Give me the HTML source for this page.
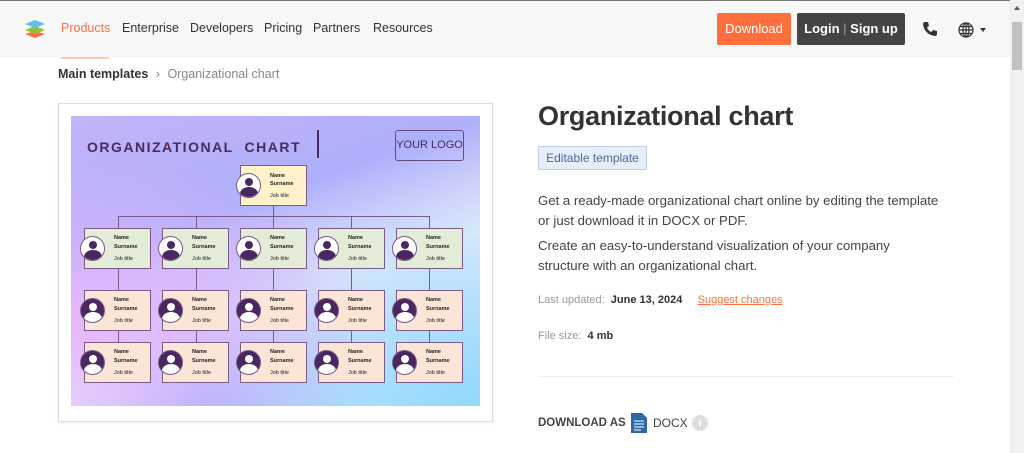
<!DOCTYPE html>
<html><head><meta charset="utf-8"><style>
*{margin:0;padding:0;box-sizing:border-box}
body{width:1024px;height:453px;overflow:hidden;background:#fff;font-family:"Liberation Sans",sans-serif;position:relative}
.a{position:absolute}
.hdr{left:0;top:0;width:1010px;height:58px;background:#f7f7f7;border-top:1px solid #777}
.nav{top:21px;font-size:12.5px;color:#333;white-space:nowrap}
.b{position:absolute;width:67px;height:41px;border:1px solid #7a5a86;background:#fbe5d6}
.b.g{background:#e2ecd6}.b.y{background:#fff2c8}
.b i{position:absolute;left:29px;font-style:normal;font-size:5.5px;color:#222;line-height:1}
.c{position:absolute;width:25px;height:25px;border-radius:50%;left:-5px;top:7px;border:1px solid #7a5a86;overflow:hidden}
.c.w{background:#fff}.c.d{background:#4a2760}
.c::before{content:"";position:absolute;left:8px;top:4px;width:8px;height:8px;border-radius:50%}
.c::after{content:"";position:absolute;left:3px;top:13px;width:18px;height:14px;border-radius:50% 50% 0 0}
.c.w::before,.c.w::after{background:#4a2760}
.c.d::before,.c.d::after{background:#fff}
.ln{position:absolute;background:#7a5a86}
</style></head><body>
<div class="a hdr"></div>
<svg class="a" style="left:24px;top:19px" width="22" height="20" viewBox="0 0 22 20"><path d="M11 12 L21 15 L11 19 L1 15Z" fill="#ff6f3d"/><path d="M11 7 L21 11 L11 15 L1 11Z" fill="#95c038"/><path d="M11 1 L21 5 L11 9 L1 5Z" fill="#5dc0e8"/></svg>
<div class="a nav" style="left:61px;color:#ff6f3d">Products</div>
<div class="a" style="left:61px;top:57px;width:48px;height:2px;background:#ffc8b5"></div>
<div class="a nav" style="left:122px">Enterprise</div>
<div class="a nav" style="left:190px">Developers</div>
<div class="a nav" style="left:264px">Pricing</div>
<div class="a nav" style="left:313px">Partners</div>
<div class="a nav" style="left:373px">Resources</div>
<div class="a" style="left:717px;top:13px;width:74px;height:32px;background:#ff6f3d;border-radius:2px;color:#fff;font-size:13px;text-align:center;line-height:32px">Download</div>
<div class="a" style="left:797px;top:13px;width:108px;height:32px;background:#444;border-radius:2px;color:#fff;font-size:13px;text-align:center;line-height:32px;font-weight:bold">Login <span style="color:#999;font-weight:normal">|</span> Sign up</div>
<svg class="a" style="left:922px;top:21px" width="16" height="16" viewBox="0 0 16 16"><path d="M3 1 L6 1 L7 5 L5 6.5 C6 9 7.5 10.5 9.5 11 L11 9 L15 10 L15 13 C15 14 14 15 13 15 C6 14 2 10 1 3 C1 2 2 1 3 1Z" fill="#333"/></svg>
<svg class="a" style="left:957px;top:21px" width="18" height="18" viewBox="0 0 18 18" fill="none" stroke="#333" stroke-width="1.2"><circle cx="9" cy="9" r="7"/><ellipse cx="9" cy="9" rx="3" ry="7"/><path d="M2 9H16M3 5.5H15M3 12.5H15M9 2V16"/></svg>
<div class="a" style="left:980px;top:28px;border:3px solid transparent;border-top:4px solid #333"></div>
<div class="a" style="left:1010px;top:0;width:14px;height:453px;background:#f1f1f1"></div>
<div class="a" style="left:1014px;top:6px;border:3px solid transparent;border-bottom:4px solid #555;border-top:none"></div>
<div class="a" style="left:1012px;top:22px;width:10px;height:48px;background:#c1c1c1"></div>
<div class="a" style="left:58px;top:67px;font-size:12.5px;color:#333;font-weight:bold">Main templates <span style="font-weight:normal;color:#888;margin:0 4px">›</span> <span style="font-weight:normal;color:#888">Organizational chart</span></div>

<div class="a" style="left:58px;top:103px;width:435px;height:319px;border:1px solid #ddd;box-shadow:0 1px 3px rgba(0,0,0,.08)"></div>
<div class="a" style="left:71px;top:116px;width:409px;height:290px;overflow:hidden;background:linear-gradient(160deg,#c4b2f8 0%,#aeb0fb 35%,#e9ebfb 60%,#c8e6fc 100%)">
<div class="a" style="left:0;top:0;width:409px;height:290px;background:radial-gradient(ellipse at 0% 70%,rgba(236,180,252,.9),rgba(236,180,252,0) 55%),radial-gradient(ellipse at 100% 100%,rgba(140,215,252,.9),rgba(140,215,252,0) 55%),radial-gradient(ellipse at 35% 100%,rgba(160,150,250,.7),rgba(160,150,250,0) 45%)"></div>
<div class="a" style="left:16px;top:23px;font-size:14px;font-weight:bold;letter-spacing:1.5px;color:#4a2b5c;white-space:nowrap">ORGANIZATIONAL&nbsp;&nbsp;CHART</div>
<div class="a" style="left:246px;top:14px;width:2px;height:28px;background:#4a2b5c"></div>
<div class="a" style="left:324px;top:14px;width:69px;height:31px;border:1.5px solid #6a4a7a;border-radius:3px;font-size:11px;color:#4a2b5c;text-align:center;line-height:28px">YOUR LOGO</div>
<div class="ln" style="left:202px;top:90px;width:1px;height:12px"></div>
<div class="ln" style="left:47px;top:100px;width:312px;height:1px"></div>
<div class="ln" style="left:47px;top:100px;width:1px;height:127px"></div>
<div class="ln" style="left:125px;top:100px;width:1px;height:127px"></div>
<div class="ln" style="left:202px;top:100px;width:1px;height:127px"></div>
<div class="ln" style="left:280px;top:100px;width:1px;height:127px"></div>
<div class="ln" style="left:358px;top:100px;width:1px;height:127px"></div>
</div>
<div id="boxes"></div>
<div class="b y" style="left:240px;top:165px"><div class="c w"></div><i style="top:8px;font-weight:bold">Name</i><i style="top:16px;font-weight:bold">Surname</i><i style="top:28px">Job title</i></div>
<script>
var L=[84,162,240,318,396],T=[228,290,342],h='';
T.forEach(function(t,r){L.forEach(function(l){h+='<div class="b '+(r==0?'g':'')+'" style="left:'+l+'px;top:'+t+'px"><div class="c '+(r==0?'w':'d')+'"></div><i style="top:7px;font-weight:bold">Name</i><i style="top:16px;font-weight:bold">Surname</i><i style="top:28px">Job title</i></div>'})});
document.getElementById('boxes').outerHTML=h;
</script>

<div class="a" style="left:538px;top:101px;font-size:27px;font-weight:bold;color:#333;letter-spacing:-0.3px">Organizational chart</div>
<div class="a" style="left:538px;top:146px;width:109px;height:24px;background:#e6eef9;border:1px solid #bccde6;border-radius:2px;font-size:12px;color:#4a6a96;text-align:center;line-height:22px">Editable template</div>
<div class="a" style="left:538px;top:191px;width:415px;font-size:13.2px;color:#444;line-height:20px">Get a ready-made organizational chart online by editing the template or just download it in DOCX or PDF.</div>
<div class="a" style="left:538px;top:236px;width:370px;font-size:13.2px;color:#444;line-height:20px">Create an easy-to-understand visualization of your company structure with an organizational chart.</div>
<div class="a" style="left:538px;top:294px;font-size:11px;color:#999">Last updated:&nbsp; <b style="color:#333">June 13, 2024</b>&nbsp;&nbsp;&nbsp;&nbsp; <span style="color:#ff6f3d;text-decoration:underline">Suggest changes</span></div>
<div class="a" style="left:538px;top:330px;font-size:11px;color:#999">File size:&nbsp; <b style="color:#333">4 mb</b></div>
<div class="a" style="left:538px;top:376px;width:416px;height:1px;background:#eee"></div>
<div class="a" style="left:538px;top:417px;font-size:11.5px;font-weight:bold;color:#444">DOWNLOAD AS</div>
<svg class="a" style="left:631px;top:413px" width="16" height="20" viewBox="0 0 16 20"><path d="M0 0H11L16 5V20H0Z" fill="#2b6aa6"/><path d="M3 8H13M3 11H13M3 14H13M3 17H10" stroke="#fff" stroke-width="1"/></svg>
<div class="a" style="left:653px;top:416px;font-size:12px;color:#444">DOCX</div>
<div class="a" style="left:692px;top:415px;width:16px;height:16px;border-radius:50%;background:#ddd;color:#fff;font-size:11px;font-weight:bold;text-align:center;line-height:16px">i</div>
</body></html>
